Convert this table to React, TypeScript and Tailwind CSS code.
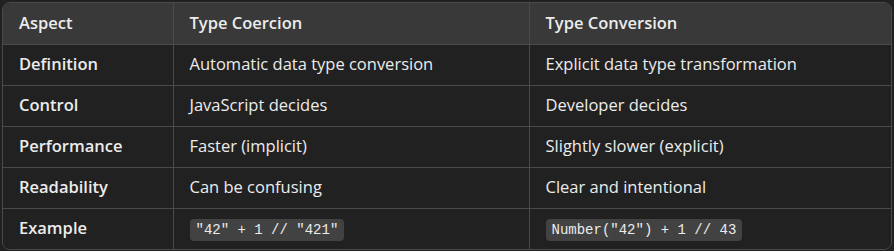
import React from "react";

type Row = {
  aspect: string;
  coercion: string;
  conversion: string;
  code?: boolean;
};

const rows: Row[] = [
  { aspect: "Definition", coercion: "Automatic data type conversion", conversion: "Explicit data type transformation" },
  { aspect: "Control", coercion: "JavaScript decides", conversion: "Developer decides" },
  { aspect: "Performance", coercion: "Faster (implicit)", conversion: "Slightly slower (explicit)" },
  { aspect: "Readability", coercion: "Can be confusing", conversion: "Clear and intentional" },
  { aspect: "Example", coercion: '"42" + 1 // "421"', conversion: 'Number("42") + 1 // 43', code: true },
];

const font = { fontFamily: '"Segoe UI", "Open Sans", "Noto Sans", sans-serif' };

function Code({ children }: { children: React.ReactNode }) {
  return (
    <code className="rounded-[4px] bg-[#424242] px-[6px] py-[3px] font-['Liberation_Mono',monospace] text-[14px] text-[#ececec]">
      {children}
    </code>
  );
}

export default function App() {
  return (
    <div className="h-[251px] w-[894px] bg-[#212121] p-[2px]" style={font}>
      <div className="overflow-hidden rounded-lg border border-[#4a4a4a]">
        <table className="w-full table-fixed border-collapse text-left text-[16.5px] text-[#ececec]">
          <colgroup>
            <col className="w-[170px]" />
            <col className="w-[356px]" />
            <col />
          </colgroup>
          <thead>
            <tr className="h-[41px] bg-[#393939]">
              <th className="border-r border-b border-[#4a4a4a] px-4 font-semibold">Aspect</th>
              <th className="border-r border-b border-[#4a4a4a] px-4 font-semibold">Type Coercion</th>
              <th className="border-b border-[#4a4a4a] px-4 font-semibold">Type Conversion</th>
            </tr>
          </thead>
          <tbody>
            {rows.map((r, i) => {
              const last = i === rows.length - 1;
              return (
                <tr key={r.aspect} className="h-[41px] bg-[#212121]">
                  <td className={`border-r border-[#4a4a4a] px-4 font-semibold ${last ? "" : "border-b"}`}>{r.aspect}</td>
                  <td className={`border-r border-[#4a4a4a] px-4 ${last ? "" : "border-b"}`}>
                    {r.code ? <Code>{r.coercion}</Code> : r.coercion}
                  </td>
                  <td className={`border-[#4a4a4a] px-4 ${last ? "" : "border-b"}`}>
                    {r.code ? <Code>{r.conversion}</Code> : r.conversion}
                  </td>
                </tr>
              );
            })}
          </tbody>
        </table>
      </div>
    </div>
  );
}
